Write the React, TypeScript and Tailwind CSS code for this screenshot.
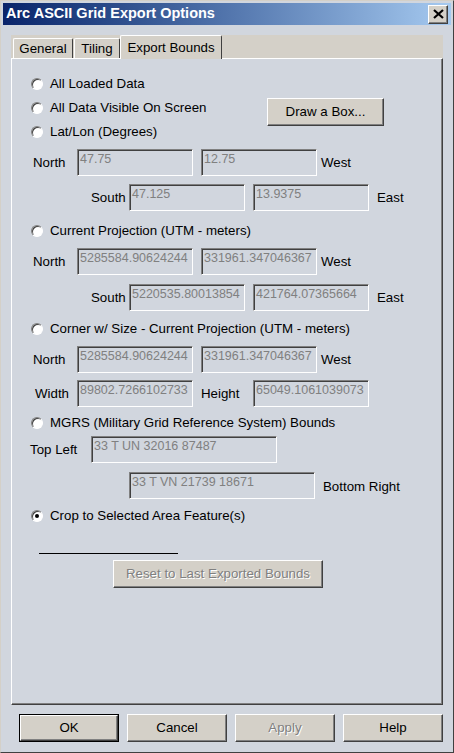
import type { ReactNode } from "react";

function Radio({ label, checked = false }: { label: string; checked?: boolean }) {
  return (
    <div className="flex h-[24px] items-center gap-[7px] pl-[19px]">
      <span className="flex h-[12px] w-[12px] items-center justify-center rounded-full border border-t-[#808080] border-l-[#808080] border-b-white border-r-white bg-white shadow-[inset_1px_1px_0_#404040]">
        {checked && <span className="h-[4px] w-[4px] rounded-full bg-black" />}
      </span>
      <span>{label}</span>
    </div>
  );
}

function Field({ value, className = "w-[116px]" }: { value: string; className?: string }) {
  return (
    <div
      className={`h-[27px] shrink-0 border border-t-[#808080] border-l-[#808080] border-b-white border-r-white pl-[2px] pt-px text-[12.5px] leading-[16px] text-[#808080] shadow-[inset_1px_1px_0_#404040] ${className}`}
    >
      {value}
    </div>
  );
}

function Button({
  children,
  className = "",
  disabled = false,
  primary = false,
}: {
  children: ReactNode;
  className?: string;
  disabled?: boolean;
  primary?: boolean;
}) {
  const text = disabled ? "text-[#808080] [text-shadow:1px_1px_0_#fff]" : "text-black";
  if (primary) {
    return (
      <div className={`border border-black ${className}`}>
        <div className={`flex h-full items-center justify-center border border-t-white border-l-white border-b-[#404040] border-r-[#404040] bg-[#d4d0c8] shadow-[inset_-1px_-1px_0_#808080] ${text}`}>
          {children}
        </div>
      </div>
    );
  }
  return (
    <div
      className={`flex items-center justify-center border border-t-white border-l-white border-b-[#404040] border-r-[#404040] bg-[#d4d0c8] shadow-[inset_-1px_-1px_0_#808080] ${text} ${className}`}
    >
      {children}
    </div>
  );
}

export default function App() {
  return (
    <div className="h-[753px] w-[454px] overflow-hidden border border-t-[#d4d0c8] border-l-[#d4d0c8] border-b-[#404040] border-r-[#404040] bg-[#d1d6de] p-[2px] font-['Liberation_Sans',Arial,sans-serif] text-[13.3px] text-black">
      {/* Title bar */}
      <div className="flex h-[22px] items-center justify-between bg-gradient-to-r from-[#0a246a] to-[#a6caf0] pl-[3px] pr-[3px]">
        <span className="text-[14.5px] font-bold text-white">Arc ASCII Grid Export Options</span>
        <div className="flex h-[19px] w-[20px] items-center justify-center border border-t-white border-l-white border-b-[#404040] border-r-[#404040] bg-[#d4d0c8] shadow-[inset_-1px_-1px_0_#808080]">
          <svg width="11" height="10" viewBox="0 0 11 10">
            <path d="M1 1 L10 9 M10 1 L1 9" stroke="black" strokeWidth="2.2" />
          </svg>
        </div>
      </div>

      {/* Tabs */}
      <div className="mx-[8px] mt-[10px] flex h-[23px] items-end bg-[#d4d0c8] pl-[2px]">
        <div className="flex h-[20px] w-[60px] items-center justify-center rounded-t-[2px] border-t border-l border-r border-t-white border-l-white border-r-[#404040]">
          General
        </div>
        <div className="ml-px flex h-[20px] w-[46px] items-center justify-center rounded-t-[2px] border-t border-l border-r border-t-white border-l-white border-r-[#404040]">
          Tiling
        </div>
        <div className="relative z-10 -mb-px flex h-[24px] w-[102px] items-start justify-center rounded-t-[2px] border-t border-l border-r border-t-white border-l-white border-r-[#404040] bg-[#d4d0c8] pt-[2px]">
          Export Bounds
        </div>
      </div>

      {/* Panel */}
      <div className="mx-[8px] flex h-[647px] flex-col border border-t-white border-l-white border-b-[#404040] border-r-[#404040] pt-[13px] shadow-[inset_-1px_-1px_0_#808080]">
        <Radio label="All Loaded Data" />
        <div className="flex items-start">
          <div className="w-[255px]">
            <Radio label="All Data Visible On Screen" />
            <Radio label="Lat/Lon (Degrees)" />
          </div>
          <Button className="mt-[2px] h-[28px] w-[117px]">Draw a Box...</Button>
        </div>

        <div className="ml-[21px] mt-[5px] flex items-center">
          <span className="w-[44px]">North</span>
          <Field value="47.75" />
          <Field value="12.75" className="ml-[8px] w-[116px]" />
          <span className="ml-[4px]">West</span>
        </div>
        <div className="ml-[79px] mt-[8px] flex items-center">
          <span className="w-[38px]">South</span>
          <Field value="47.125" />
          <Field value="13.9375" className="ml-[8px] w-[116px]" />
          <span className="ml-[8px]">East</span>
        </div>

        <div className="mt-[8px]">
          <Radio label="Current Projection (UTM - meters)" />
        </div>
        <div className="ml-[21px] mt-[5px] flex items-center">
          <span className="w-[44px]">North</span>
          <Field value="5285584.90624244" />
          <Field value="331961.347046367" className="ml-[8px] w-[116px]" />
          <span className="ml-[4px]">West</span>
        </div>
        <div className="ml-[79px] mt-[9px] flex items-center">
          <span className="w-[38px]">South</span>
          <Field value="5220535.80013854" />
          <Field value="421764.07365664" className="ml-[8px] w-[116px]" />
          <span className="ml-[8px]">East</span>
        </div>

        <div className="mt-[6px]">
          <Radio label="Corner w/ Size - Current Projection (UTM - meters)" />
        </div>
        <div className="ml-[21px] mt-[5px] flex items-center">
          <span className="w-[44px]">North</span>
          <Field value="5285584.90624244" />
          <Field value="331961.347046367" className="ml-[8px] w-[116px]" />
          <span className="ml-[4px]">West</span>
        </div>
        <div className="ml-[23px] mt-[7px] flex items-center">
          <span className="w-[42px]">Width</span>
          <Field value="89802.7266102733" />
          <span className="ml-[8px] w-[52px]">Height</span>
          <Field value="65049.1061039073" />
        </div>

        <div className="mt-[4px]">
          <Radio label="MGRS (Military Grid Reference System) Bounds" />
        </div>
        <div className="ml-[18px] mt-px flex items-center">
          <span className="w-[61px]">Top Left</span>
          <Field value="33 T UN 32016 87487" className="w-[186px]" />
        </div>
        <div className="ml-[117px] mt-[9px] flex items-center">
          <Field value="33 T VN 21739 18671" className="w-[186px]" />
          <span className="ml-[8px] pt-[2px]">Bottom Right</span>
        </div>

        <div className="mt-[5px]">
          <Radio label="Crop to Selected Area Feature(s)" checked />
        </div>

        <div className="ml-[27px] mt-[25px] h-px w-[139px] bg-black" />
        <Button disabled className="ml-[101px] mt-[6px] h-[28px] w-[210px]">
          Reset to Last Exported Bounds
        </Button>
      </div>

      {/* Dialog buttons */}
      <div className="ml-[16px] mt-[9px] flex gap-[8px]">
        <Button primary className="h-[28px] w-[100px]">OK</Button>
        <Button className="h-[28px] w-[100px]">Cancel</Button>
        <Button disabled className="h-[28px] w-[100px]">Apply</Button>
        <Button className="h-[28px] w-[100px]">Help</Button>
      </div>
    </div>
  );
}
